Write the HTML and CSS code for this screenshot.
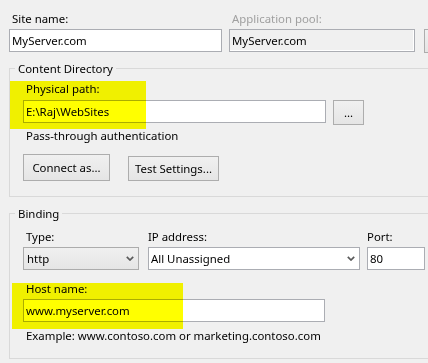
FILE: index.html
```html
<!DOCTYPE html>
<html lang="en">
<head>
    <meta charset="UTF-8">
    <meta name="viewport" content="width=device-width, initial-scale=1.0">
    <title>Add Website</title>
    <link rel="stylesheet" href="styles.css">
</head>
<body>
    <div class="dialog">
        <div class="top-row">
            <div class="field site">
                <label for="site-name">Site name:</label>
                <input type="text" id="site-name" class="text" value="MyServer.com">
            </div>
            <div class="field pool">
                <label for="app-pool" class="label-disabled">Application pool:</label>
                <input type="text" id="app-pool" class="text" value="MyServer.com" readonly>
            </div>
            <button class="btn select-btn" aria-label="Select application pool"></button>
        </div>

        <fieldset class="group content-dir">
            <legend>Content Directory</legend>
            <div class="field path">
                <label for="physical-path">Physical path:</label>
                <div class="input-row">
                    <input type="text" id="physical-path" class="text" value="E:\Raj\WebSites">
                    <button class="btn browse">...</button>
                </div>
                <span class="highlight"></span>
            </div>
            <p class="note">Pass-through authentication</p>
            <div class="button-row">
                <button class="btn connect">Connect as...</button>
                <button class="btn test">Test Settings...</button>
            </div>
        </fieldset>

        <fieldset class="group binding">
            <legend>Binding</legend>
            <div class="binding-row">
                <div class="field type">
                    <label>Type:</label>
                    <div class="combo combo-type">
                        <span>http</span>
                        <svg width="8" height="5" viewBox="0 0 8 5"><polyline points="0.8,0.8 4,4 7.2,0.8" fill="none" stroke="#5a5a5a" stroke-width="1.7"/></svg>
                    </div>
                </div>
                <div class="field ip">
                    <label>IP address:</label>
                    <div class="combo combo-ip">
                        <span>All Unassigned</span>
                        <svg width="8" height="5" viewBox="0 0 8 5"><polyline points="0.8,0.8 4,4 7.2,0.8" fill="none" stroke="#5a5a5a" stroke-width="1.7"/></svg>
                    </div>
                </div>
                <div class="field port">
                    <label for="port">Port:</label>
                    <input type="text" id="port" class="text" value="80">
                </div>
            </div>
            <div class="field host">
                <label for="host-name">Host name:</label>
                <input type="text" id="host-name" class="text" value="www.myserver.com">
                <span class="highlight"></span>
            </div>
            <p class="note">Example: www.contoso.com or marketing.contoso.com</p>
        </fieldset>
    </div>
</body>
</html>
```

FILE: styles.css
```css
html, body {
    margin: 0;
    padding: 0;
    overflow: hidden;
}

body {
    font-family: "Noto Sans", sans-serif;
    font-size: 11.4px;
    line-height: 15px;
    color: #000;
    background-color: #f0f0f0;
}

.dialog {
    width: 460px;
    padding: 11px 0 0 9px;
    background-color: #f0f0f0;
    isolation: isolate;
}

.top-row {
    display: flex;
    align-items: flex-start;
}

.field {
    display: flex;
    flex-direction: column;
    align-items: flex-start;
    position: relative;
}

.field label {
    padding-left: 3px;
    margin-bottom: 3px;
}

.label-disabled {
    color: #a0a0a0;
}

.text {
    box-sizing: border-box;
    height: 23px;
    margin: 0;
    padding: 0 2px 1px;
    border: 1px solid #abadb3;
    background-color: #fff;
    font: inherit;
    color: #000;
    outline: none;
}

.site .text {
    width: 213px;
}

.pool {
    margin-left: 7px;
}

.pool .text {
    width: 186px;
    background-color: #f0f0f0;
    box-shadow: inset -1px -1px 0 #fff;
}

.btn {
    box-sizing: border-box;
    margin: 0;
    padding: 0;
    border: 1px solid #adadad;
    background: linear-gradient(#f0f0f0, #e5e5e5);
    font: inherit;
    color: #000;
}

.select-btn {
    flex-shrink: 0;
    width: 75px;
    height: 24px;
    margin: 18px 0 0 9px;
}

/* group boxes */
.group {
    box-sizing: border-box;
    width: 440px;
    min-width: 0;
    margin: 8px 0 0;
    padding: 5px 0 15px 13px;
    border: 1px solid #d9d9d9;
}

.group legend {
    padding: 0 3px;
    margin-left: -8px;
}

.binding {
    margin-top: 9px;
    padding-top: 8px;
}

.path label {
    margin-bottom: 4px;
}

.input-row {
    display: flex;
    align-items: flex-start;
}

.path .text {
    width: 303px;
}

.browse {
    width: 31px;
    height: 25px;
    margin-left: 7px;
}

.note {
    margin: 3px 0 0;
    padding-left: 3px;
}

.button-row {
    display: flex;
    align-items: flex-end;
    margin-top: 11px;
}

.connect {
    width: 87px;
    height: 27px;
}

.test {
    width: 91px;
    height: 25px;
    margin-left: 18px;
}

/* binding */
.binding-row {
    display: flex;
}

.combo {
    box-sizing: border-box;
    height: 23px;
    display: flex;
    align-items: center;
    justify-content: space-between;
    padding: 0 4px 1px 3px;
    border: 1px solid #acacac;
}

.combo-type {
    width: 116px;
    background: linear-gradient(#f0f0f0, #e5e5e5);
}

.combo-ip {
    width: 212px;
    padding-left: 2px;
    background-color: #fff;
    border-color: #abadb3;
}

.ip {
    margin-left: 9px;
}

.ip label,
.port label {
    padding-left: 0;
}

.port {
    margin-left: 7px;
}

.port .text {
    width: 58px;
}

.host {
    margin-top: 11px;
}

.host .text {
    width: 302px;
}

.binding .note {
    margin-top: 6px;
}

/* yellow marker boxes drawn over the screenshot */
.highlight {
    position: absolute;
    background-color: #ffff00;
    mix-blend-mode: multiply;
    pointer-events: none;
}

.path .highlight {
    left: -13px;
    top: 0;
    width: 136px;
    height: 48px;
}

.host .highlight {
    left: -11px;
    top: 2px;
    width: 171px;
    height: 46px;
}
```
